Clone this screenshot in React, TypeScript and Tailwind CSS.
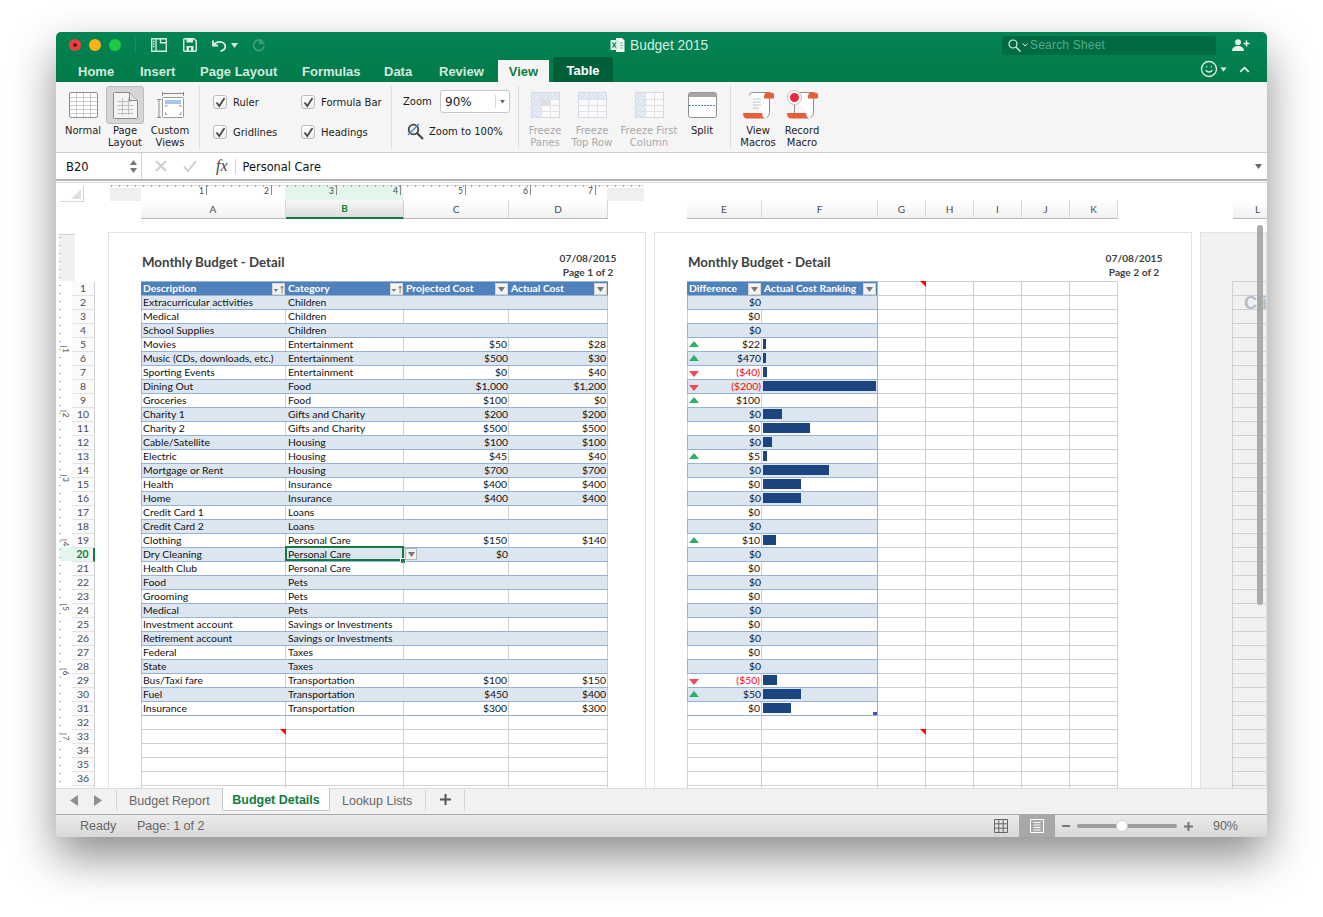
import { ChevronUp, Smile } from 'lucide-react'
import type { ReactNode } from 'react'

type Row = { a: string; b: string; c?: string; d?: string; e?: string; dir?: 'up' | 'down'; bar?: number }

const rows: Row[] = [
  { a: 'Extracurricular activities', b: 'Children', e: '$0' },
  { a: 'Medical', b: 'Children', e: '$0' },
  { a: 'School Supplies', b: 'Children', e: '$0' },
  { a: 'Movies', b: 'Entertainment', c: '$50', d: '$28', e: '$22', dir: 'up', bar: 3 },
  { a: 'Music (CDs, downloads, etc.)', b: 'Entertainment', c: '$500', d: '$30', e: '$470', dir: 'up', bar: 3 },
  { a: 'Sporting Events', b: 'Entertainment', c: '$0', d: '$40', e: '($40)', dir: 'down', bar: 4 },
  { a: 'Dining Out', b: 'Food', c: '$1,000', d: '$1,200', e: '($200)', dir: 'down', bar: 113 },
  { a: 'Groceries', b: 'Food', c: '$100', d: '$0', e: '$100', dir: 'up' },
  { a: 'Charity 1', b: 'Gifts and Charity', c: '$200', d: '$200', e: '$0', bar: 19 },
  { a: 'Charity 2', b: 'Gifts and Charity', c: '$500', d: '$500', e: '$0', bar: 47 },
  { a: 'Cable/Satellite', b: 'Housing', c: '$100', d: '$100', e: '$0', bar: 9 },
  { a: 'Electric', b: 'Housing', c: '$45', d: '$40', e: '$5', dir: 'up', bar: 4 },
  { a: 'Mortgage or Rent', b: 'Housing', c: '$700', d: '$700', e: '$0', bar: 66 },
  { a: 'Health', b: 'Insurance', c: '$400', d: '$400', e: '$0', bar: 38 },
  { a: 'Home', b: 'Insurance', c: '$400', d: '$400', e: '$0', bar: 38 },
  { a: 'Credit Card 1', b: 'Loans', e: '$0' },
  { a: 'Credit Card 2', b: 'Loans', e: '$0' },
  { a: 'Clothing', b: 'Personal Care', c: '$150', d: '$140', e: '$10', dir: 'up', bar: 13 },
  { a: 'Dry Cleaning', b: 'Personal Care', c: '$0', e: '$0' },
  { a: 'Health Club', b: 'Personal Care', e: '$0' },
  { a: 'Food', b: 'Pets', e: '$0' },
  { a: 'Grooming', b: 'Pets', e: '$0' },
  { a: 'Medical', b: 'Pets', e: '$0' },
  { a: 'Investment account', b: 'Savings or Investments', e: '$0' },
  { a: 'Retirement account', b: 'Savings or Investments', e: '$0' },
  { a: 'Federal', b: 'Taxes', e: '$0' },
  { a: 'State', b: 'Taxes', e: '$0' },
  { a: 'Bus/Taxi fare', b: 'Transportation', c: '$100', d: '$150', e: '($50)', dir: 'down', bar: 14 },
  { a: 'Fuel', b: 'Transportation', c: '$450', d: '$400', e: '$50', dir: 'up', bar: 38 },
  { a: 'Insurance', b: 'Transportation', c: '$300', d: '$300', e: '$0', bar: 28 },
]

const emptyRows = [32, 33, 34, 35, 36, 37]
const allRowNumbers = Array.from({ length: 37 }, (_, i) => i + 1)

// ---- ribbon icons ----

function NormalIcon() {
  return (
    <svg width="29" height="26" viewBox="0 0 29 26">
      <rect x="0.5" y="0.5" width="28" height="25" rx="1.5" fill="#fff" stroke="#8f8f8f" />
      {[5, 9, 13, 17, 21].map((y) => (
        <line key={y} x1="1" x2="28" y1={y + 0.5} y2={y + 0.5} stroke="#c9c9c9" />
      ))}
      {[7, 14, 21].map((x) => (
        <line key={x} x1={x + 0.5} x2={x + 0.5} y1="1" y2="25" stroke="#c9c9c9" />
      ))}
    </svg>
  )
}

function PageLayoutIcon() {
  return (
    <svg width="25" height="27" viewBox="0 0 25 27">
      <path d="M.5 1.5a1 1 0 0 1 1-1h15l8 8v17a1 1 0 0 1-1 1h-22a1 1 0 0 1-1-1z" fill="#f4f4f4" stroke="#8a8a8a" />
      <path d="M16.5.5v8h8" fill="#e4e4e4" stroke="#8a8a8a" />
      <path d="M4.5 9.5h13M4.5 13.5h16M4.5 17.5h16M4.5 21.5h16M9.5 6v17M15.5 6v17" stroke="#bdbdbd" fill="none" />
    </svg>
  )
}

function CustomViewsIcon() {
  return (
    <svg width="29" height="28" viewBox="0 0 29 28">
      <path d="M6.5 1v4M27.5 1v4M6.5 2.5h21" stroke="#8a8a8a" fill="none" />
      <path d="M1 8.5h4M3 8.5v18M1 26.5h4" stroke="#8a8a8a" fill="none" />
      <rect x="6.5" y="6.5" width="21" height="20" rx="1" fill="#fff" stroke="#9a9a9a" />
      <rect x="9" y="9" width="16" height="4" fill="#a9c6ea" />
      <path d="M9.5 16v-1.5h2M23 14.5h2v1.5M9.5 21v2.500h2M23 23.500h2V21" stroke="#9a9a9a" fill="none" />
    </svg>
  )
}

function FreezeIcon({ variant }: { variant: 'panes' | 'row' | 'col' }) {
  const hid = `hatch-${variant}`
  return (
    <svg width="29" height="26" viewBox="0 0 29 26">
      <defs>
        <pattern id={hid} width="3" height="3" patternUnits="userSpaceOnUse" patternTransform="rotate(45)">
          <rect width="3" height="3" fill="#f0f4fa" />
          <rect width="1.400" height="3" fill="#cfdcee" />
        </pattern>
      </defs>
      <rect x="0.5" y="0.5" width="28" height="25" fill="#fbfbfb" stroke="#d4dbe4" />
      {variant !== 'col' && <rect x="1" y="1" width="27" height="6" fill={`url(#${hid})`} />}
      {variant !== 'row' && <rect x="1" y="1" width="9" height="24" fill={`url(#${hid})`} />}
      {variant === 'panes' && <rect x="10" y="7" width="9" height="6" fill="#dedede" />}
      <path d="M1 7.500h27M1 13.500h27M1 19.500h27M10.500 1v24M19.500 1v24" stroke="#dde1e6" fill="none" />
    </svg>
  )
}

function SplitIcon() {
  return (
    <svg width="29" height="26" viewBox="0 0 29 26">
      <rect x="0.5" y="0.5" width="28" height="25" rx="2" fill="#fff" stroke="#8f8f8f" />
      <path d="M1 2.500a2 2 0 0 1 2-2h23a2 2 0 0 1 2 2V5H1z" fill="#a5a5a5" />
      <path d="M1 13.500h27" stroke="#3f83d8" strokeDasharray="2 1" />
    </svg>
  )
}

function ScrollIcon({ record }: { record?: boolean }) {
  return (
    <svg width="33" height="30" viewBox="0 0 33 30">
      <path d="M7.500 5.500q0-3 3-3h17v20q0 4-3 5" fill="#fff" stroke="#8c8c8c" />
      <path d="M25 2.500q-3 0-3 5v1h9q1 0 1-1V5q0-2.500-3-2.500z" fill="#e2603a" />
      <path d="M1 23h19q0 4 3 5.500H4q-3-1-3-5.500z" fill="#e2603a" />
      {!record && <path d="M11 9h8M11 12h8M11 15h8M11 18h6" stroke="#b9bfc8" fill="none" />}
      {record && (
        <>
          <circle cx="8.500" cy="7.500" r="7" fill="#fff" stroke="#bdbdbd" />
          <circle cx="8.500" cy="7.500" r="4.500" fill="#ea2839" />
          <path d="M8.500 15v8" stroke="#8c8c8c" />
        </>
      )}
    </svg>
  )
}

function Caret({ className = '' }: { className?: string }) {
  return (
    <svg width="7" height="5" viewBox="0 0 7 5" className={className}>
      <path d="M0 0h7L3.500 5z" fill="currentColor" />
    </svg>
  )
}

function RibbonButton({ icon, lines, width, selected, off }: { icon: ReactNode; lines: string[]; width: string; selected?: boolean; off?: boolean }) {
  return (
    <div className={`flex flex-col items-center ${width}`}>
      <div className={`flex h-[38px] w-[38px] shrink-0 items-center justify-center rounded-[3px] ${selected ? 'border border-[#bcbcbc] bg-[#d6d6d6]' : ''}`}>
        {icon}
      </div>
      <div className={`mt-px shrink-0 text-center text-[10px] leading-[12px] whitespace-nowrap ${off ? 'text-[#a9a9a9]' : 'text-[#1c1c1c]'}`}>
        {lines.map((l) => (
          <div key={l}>{l}</div>
        ))}
      </div>
    </div>
  )
}

function Check({ label, width }: { label: string; width: string }) {
  return (
    <div className={`flex h-[14px] items-center ${width}`}>
      <span className="flex h-[14px] w-[14px] items-center justify-center rounded-[3px] border border-[#bdbdbd] bg-gradient-to-b from-white to-[#ebebeb]">
        <svg width="11" height="11" viewBox="0 0 11 11">
          <path d="M1.500 5.500 4.300 9 9.500 1" fill="none" stroke="#444" strokeWidth="1.700" />
        </svg>
      </span>
      <span className="ml-[6px] text-[10px] text-[#1c1c1c] whitespace-nowrap">{label}</span>
    </div>
  )
}

// ---- sheet parts ----

function FilterBtn({ sorted }: { sorted?: boolean }) {
  return (
    <span className="absolute top-px right-px flex h-[12px] w-[13px] items-center justify-center border border-[#d4d4d4] bg-[#f3f3f3] text-[#777]">
      <Caret className={sorted ? 'mr-[1px] mt-[3px] scale-75' : ''} />
      {sorted && (
        <svg width="5" height="9" viewBox="0 0 5 9">
          <path d="M2.500 9V1M.5 3l2-2.500L4.500 3" stroke="#666" fill="none" />
        </svg>
      )}
    </span>
  )
}

function HeaderCell({ label, width, sorted, last }: { label: string; width: string; sorted?: boolean; last?: boolean }) {
  return (
    <div className={`relative h-full shrink-0 bg-[#4f81bd] pl-[2px] text-[10.3px] leading-[13px] font-bold text-white ${width} ${last ? 'border-r border-[#95b3d7]' : ''}`}>
      {label}
      <FilterBtn sorted={sorted} />
    </div>
  )
}

function Cell({ width, band, right, first, last, children }: { width: string; band?: boolean; right?: boolean; first?: boolean; last?: boolean; children?: ReactNode }) {
  return (
    <div
      className={`relative h-full shrink-0 whitespace-nowrap ${width} ${right ? 'pr-px text-right' : first ? 'pl-px' : 'pl-[2px]'} ${first ? 'border-l border-[#95b3d7]' : ''} ${
        last ? 'border-r border-[#c9c9c9]' : band ? '' : 'border-r border-[#cfcfcf]'
      }`}
    >
      {children}
    </div>
  )
}

function GridCell({ width, children }: { width: string; children?: ReactNode }) {
  return <div className={`relative h-full shrink-0 border-r border-[#d0d0d0] ${width}`}>{children}</div>
}

function RedMark() {
  return <span className="absolute -top-px -right-px h-0 w-0 border-t-[6px] border-l-[6px] border-t-[#ff0000] border-l-transparent" />
}

function PageHead({ page }: { page: number }) {
  return (
    <div className="flex h-[48px] items-start">
      <div className="mt-[21px] ml-[33px] text-[13.3px] leading-[16px] font-bold text-[#404040]">Monthly Budget - Detail</div>
      <div className="mt-[18px] mr-[27px] ml-auto w-[60px] text-center text-[10.2px] leading-[14px] font-bold whitespace-nowrap text-[#404040]">
        <div>07/08/2015</div>
        <div>Page {page} of 2</div>
      </div>
    </div>
  )
}

function PageOne() {
  return (
    <div className="ml-[13px] h-[600px] w-[538px] shrink-0 border border-[#e2e2e2] bg-white">
      <PageHead page={1} />
      <div className="ml-[32px] text-[10.4px] leading-[13px] text-[#111]">
        <div className="h-px w-[467px] bg-[#95b3d7]" />
        <div className="flex h-[14px] w-[467px] border-b border-[#95b3d7]">
          <HeaderCell label="Description" width="w-[145px]" sorted />
          <HeaderCell label="Category" width="w-[118px]" sorted />
          <HeaderCell label="Projected Cost" width="w-[105px]" />
          <HeaderCell label="Actual Cost" width="w-[99px]" />
        </div>
        {rows.map((r, i) => {
          const n = i + 2
          const band = n % 2 === 0
          return (
            <div key={n} className={`flex h-[14px] w-[467px] border-b border-[#95b3d7] ${band ? 'bg-[#dce6f1]' : ''}`}>
              <Cell width="w-[145px]" band={band} first>
                {r.a}
              </Cell>
              <Cell width="w-[118px]" band={band}>
                {r.b}
                {n === 20 && (
                  <>
                    <span className="absolute -top-[2px] -left-px h-[15px] w-[119px] border-2 border-[#107c41]" />
                    <span className="absolute -right-[2px] -bottom-[3px] h-[6px] w-[6px] border border-white bg-[#107c41]" />
                    <span className="absolute top-0 -right-[13px] z-10 flex h-[12px] w-[12px] items-center justify-center border border-[#b5b5b5] bg-[#f0f0f0] text-[#777]">
                      <Caret />
                    </span>
                  </>
                )}
              </Cell>
              <Cell width="w-[105px]" band={band} right>
                {r.c}
              </Cell>
              <Cell width="w-[99px]" band={band} right last>
                {r.d}
              </Cell>
            </div>
          )
        })}
        {emptyRows.map((n) => (
          <div key={n} className="flex h-[14px] w-[467px] border-b border-[#d0d0d0]">
            <GridCell width="w-[145px] border-l">{n === 33 && <RedMark />}</GridCell>
            <GridCell width="w-[118px]" />
            <GridCell width="w-[105px]" />
            <GridCell width="w-[99px]" />
          </div>
        ))}
      </div>
    </div>
  )
}

function PageTwo() {
  const tail = ['g', 'h', 'i', 'j', 'k']
  return (
    <div className="ml-[8px] h-[600px] w-[538px] shrink-0 border border-[#e2e2e2] bg-white">
      <PageHead page={2} />
      <div className="ml-[32px] text-[10.4px] leading-[13px] text-[#111]">
        <div className="flex h-px">
          <div className="w-[191px] bg-[#95b3d7]" />
          <div className="w-[240px] bg-[#d0d0d0]" />
        </div>
        <div className="flex h-[14px] w-[431px]">
          <div className="flex border-b border-[#95b3d7]">
            <HeaderCell label="Difference" width="w-[75px]" />
            <HeaderCell label="Actual Cost Ranking" width="w-[116px]" last />
          </div>
          <div className="flex border-b border-[#d0d0d0]">
            {tail.map((k) => (
              <GridCell key={k} width="w-[48px]">
                {k === 'g' && <RedMark />}
              </GridCell>
            ))}
          </div>
        </div>
        {rows.map((r, i) => {
          const n = i + 2
          const band = n % 2 === 0
          return (
            <div key={n} className="flex h-[14px] w-[431px]">
              <div className={`flex border-b border-[#95b3d7] ${band ? 'bg-[#dce6f1]' : ''}`}>
                <Cell width="w-[75px]" band={band} right first>
                  {r.dir === 'up' && (
                    <svg width="10" height="6" viewBox="0 0 10 6" className="absolute top-[3px] left-[1px]">
                      <path d="M5 0l5 6H0z" fill="#2fae6b" />
                    </svg>
                  )}
                  {r.dir === 'down' && (
                    <svg width="10" height="6" viewBox="0 0 10 6" className="absolute top-[5px] left-[1px]">
                      <path d="M0 0h10L5 6z" fill="#f0495a" />
                    </svg>
                  )}
                  <span className={r.dir === 'down' ? 'text-[#ff0000]' : ''}>{r.e}</span>
                </Cell>
                <div className="relative h-full w-[116px] shrink-0 border-r border-[#95b3d7] pt-[1px] pl-px">
                  {r.bar && <div className="h-[10px] bg-[#1b4481]" style={{ width: r.bar }} />}
                  {n === 31 && <span className="absolute right-0 bottom-0 h-[3px] w-[4px] bg-[#4a50b5]" />}
                </div>
              </div>
              <div className="flex border-b border-[#d0d0d0]">
                {tail.map((k) => (
                  <GridCell key={k} width="w-[48px]" />
                ))}
              </div>
            </div>
          )
        })}
        {emptyRows.map((n) => (
          <div key={n} className="flex h-[14px] w-[431px] border-b border-[#d0d0d0]">
            <GridCell width="w-[75px] border-l" />
            <GridCell width="w-[116px]" />
            {tail.map((k) => (
              <GridCell key={k} width="w-[48px]">
                {n === 33 && k === 'g' && <RedMark />}
              </GridCell>
            ))}
          </div>
        ))}
      </div>
    </div>
  )
}

function PageThree() {
  return (
    <div className="ml-[8px] h-[600px] flex-1 border border-[#e2e2e2] bg-[#f1f1f1]">
      <div className="h-[48px]" />
      <div className="relative ml-[31px] border-t border-l border-[#d0d0d0]">
        {allRowNumbers.map((n) => (
          <div key={n} className="h-[14px] border-b border-[#d0d0d0]" />
        ))}
        <span className="absolute top-[11px] left-[11px] font-['Liberation_Sans',sans-serif] text-[18px] leading-[20px] font-bold whitespace-nowrap text-[#b4bcc8]">
          Cli
        </span>
      </div>
    </div>
  )
}

function VerticalRuler() {
  const marks = [131.5, 196, 260.5, 325, 389.5, 454, 519]
  const small = Array.from({ length: 70 }, (_, i) => 18 + i * 8)
  return (
    <svg width="12" height="569" viewBox="0 0 12 569" className="shrink-0 overflow-visible">
      <rect x="-1" y="15" width="16" height="47" fill="#f0f0f0" />
      <rect x="-1" y="15" width="16" height="1" fill="#cfcfcf" />
      <rect x="0" y="328" width="13" height="14" fill="#e2f6ec" />
      {small.map((y) => (
        <line key={y} x1="-1" x2="1" y1={y + 0.5} y2={y + 0.5} stroke="#b4b4b4" />
      ))}
      {marks.map((y, i) => (
        <g key={y}>
          <line x1="0" x2="7" y1={y - 4} y2={y - 4} stroke="#8a8a8a" />
          <text x="0" y="0" fontSize="8" fill="#444" fontFamily="Lato, sans-serif" textAnchor="middle" transform={`translate(3 ${y}) rotate(90)`}>
            {i + 1}
          </text>
        </g>
      ))}
    </svg>
  )
}

function HorizontalRuler() {
  const marks = [96, 161, 226, 290, 355, 420, 485]
  const small = Array.from({ length: 67 }, (_, i) => i * 8 + 1)
  return (
    <svg width="535" height="16" viewBox="0 0 535 16" className="mt-[2px] shrink-0">
      <rect x="0" y="3" width="31" height="13" fill="#efefef" />
      <rect x="497" y="3" width="37" height="13" fill="#efefef" />
      <rect x="175" y="1" width="118" height="15" fill="#e2f6ec" />
      <line x1="0" x2="534" y1="0.500" y2="0.500" stroke="#dedede" />
      {small.map((x) => (
        <line key={x} x1={x + 0.5} x2={x + 0.5} y1="0" y2="2" stroke="#a8a8a8" />
      ))}
      {marks.map((x, i) => (
        <g key={x}>
          <line x1={x + 0.5} x2={x + 0.5} y1="0" y2="10" stroke="#8a8a8a" />
          <text x={x - 2} y="9" fontSize="8.500" textAnchor="end" fill="#444" fontFamily="Lato, sans-serif">
            {i + 1}
          </text>
        </g>
      ))}
    </svg>
  )
}

function ColHead({ label, width, active }: { label: string; width: string; active?: boolean }) {
  return (
    <div
      className={`flex h-full shrink-0 items-center justify-center border-r text-[10px] ${width} ${
        active
          ? 'border-b-2 border-r-[#cfcfcf] border-b-[#107c41] bg-gradient-to-b from-[#f8f8f8] to-[#dcdcdc] font-bold text-[#107c41]'
          : 'border-b border-r-[#d8d8d8] border-b-[#b8b8b8] bg-gradient-to-b from-white to-[#f1f1f1] text-[#4a4a55]'
      }`}
    >
      {label}
    </div>
  )
}

export default function App() {
  return (
    <div className="h-[917px] w-[1323px] overflow-hidden bg-white pt-[32px] pl-[56px]">
      <div className="flex h-[805px] w-[1211px] flex-col overflow-hidden rounded-[5px] bg-white font-['Liberation_Sans',sans-serif] shadow-[0_20px_45px_rgba(0,0,0,0.45)]">
        {/* green title bar */}
        <div className="h-[50px] shrink-0 bg-gradient-to-b from-[#038453] to-[#027a4a]">
          <div className="flex h-[26px] items-center">
            <div className="flex w-[554px] items-center">
              <span className="ml-[13px] flex h-[12px] w-[12px] items-center justify-center rounded-full bg-[#f1403f]">
                <span className="h-[4px] w-[4px] rounded-full bg-[#6e0f10]" />
              </span>
              <span className="ml-[8px] h-[12px] w-[12px] rounded-full bg-[#fbb216]" />
              <span className="ml-[8px] h-[12px] w-[12px] rounded-full bg-[#1fc94b]" />
              <span className="ml-[14px] h-[16px] w-px bg-[#0f9463]" />
              <svg width="16" height="14" viewBox="0 0 16 14" className="ml-[15px] text-[#dcefe6]">
                <path d="M.75.75h14.500v12.500H.75zM5 .75v12.500M2 3.500h1.500M2 6h1.500M2 8.500h1.500" fill="none" stroke="currentColor" strokeWidth="1.300" />
                <path d="M9.500.75v4h5.500" fill="none" stroke="currentColor" strokeWidth="1.300" />
              </svg>
              <svg width="14" height="14" viewBox="0 0 14 14" className="ml-[16px] text-[#dcefe6]">
                <path d="M1.500.75h9.500L13.250 3v9.500a.75.75 0 0 1-.75.750h-11a.75.75 0 0 1-.75-.75v-11a.75.75 0 0 1 .75-.75z" fill="none" stroke="currentColor" strokeWidth="1.400" />
                <path d="M3.500 1h6.500v3.500H3.500zM3.500 8h7v5.500h-7z" fill="currentColor" />
                <rect x="6" y="9.500" width="2" height="3" fill="#027f4e" />
              </svg>
              <svg width="16" height="13" viewBox="0 0 16 13" className="ml-[15px] text-[#dcefe6]">
                <path d="M1 1.500v5h5M1.500 6.200C3 3.800 5 2.800 7.500 2.800c3.500 0 5.800 2.200 5.800 4.700S11 12 8.500 12" fill="none" stroke="currentColor" strokeWidth="1.800" />
              </svg>
              <Caret className="ml-[3px] text-[#cfe8dc]" />
              <svg width="13" height="14" viewBox="0 0 13 14" className="ml-[14px] text-[#3f9f79]">
                <path d="M8 1v4.500h4.500M11.500 5A5.200 5.200 0 1 0 12 8" fill="none" stroke="currentColor" strokeWidth="1.700" />
              </svg>
            </div>
            <div className="flex w-[392px] items-center">
              <svg width="15" height="16" viewBox="0 0 15 16">
                <path d="M6 1h6l2.500 2.500V15H6z" fill="#f2f8f5" />
                <rect x="0.500" y="3" width="8" height="10" fill="#d7eee2" />
                <path d="M2.500 5.500l3.500 5M6 5.500l-3.500 5" stroke="#027f4e" strokeWidth="1.200" />
                <path d="M10 6h3M10 8.500h3M10 11h3" stroke="#79b89b" />
              </svg>
              <span className="mt-[3px] ml-[5px] text-[13.8px] text-[#d6ece2]">Budget 2015</span>
            </div>
            <div className="flex h-[19px] w-[214px] items-center rounded-[3px] bg-[#006a43] pl-[6px]">
              <svg width="13" height="13" viewBox="0 0 13 13">
                <circle cx="5" cy="5" r="4" fill="none" stroke="#dcefe6" strokeWidth="1.200" />
                <path d="M8 8l4.500 4.500" stroke="#dcefe6" strokeWidth="1.300" />
              </svg>
              <svg width="6" height="4" viewBox="0 0 6 4" className="ml-px">
                <path d="M.5.5 3 3 5.500.5" fill="none" stroke="#dcefe6" />
              </svg>
              <span className="ml-[2px] text-[12px] tracking-[0.2px] text-[#58a98a]">Search Sheet</span>
            </div>
            <svg width="18" height="12" viewBox="0 0 18 12" className="ml-[16px]">
              <circle cx="6" cy="3.200" r="3" fill="#e2f1ea" />
              <path d="M0 12c0-3.500 2.500-5 6-5s6 1.500 6 5z" fill="#e2f1ea" />
              <path d="M14.500 1.500v6M11.500 4.500h6" stroke="#e2f1ea" strokeWidth="1.600" />
            </svg>
          </div>
          <div className="flex h-[24px] items-end text-[13px] font-bold text-[#d3eadf]">
            <span className="mb-[1px] ml-[22px] w-[62px]">Home</span>
            <span className="mb-[1px] w-[60px]">Insert</span>
            <span className="mb-[1px] w-[102px]">Page Layout</span>
            <span className="mb-[1px] w-[82px]">Formulas</span>
            <span className="mb-[1px] w-[55px]">Data</span>
            <span className="mb-[1px] w-[59px]">Review</span>
            <span className="flex h-[22px] w-[51px] items-center justify-center bg-[#f5f5f5] pt-[1px] text-[#107c41]">View</span>
            <span className="ml-[4px] -mt-px flex h-[25px] w-[60px] items-center justify-center rounded-t-[4px] bg-[#005f39] pt-[3px] text-white">Table</span>
            <div className="mb-[4px] ml-auto flex items-center text-[#dcefe6]">
              <Smile size={18} strokeWidth={1.800} />
              <Caret className="ml-[2px] scale-90" />
              <ChevronUp size={15} strokeWidth={3} className="mr-[15px] ml-[10px]" />
            </div>
          </div>
        </div>

        {/* ribbon */}
        <div className="flex h-[71px] shrink-0 border-b border-[#cfcfcf] bg-[#f5f5f5] pt-[4px] font-['DejaVu_Sans',sans-serif]">
          <div className="flex h-[62px] w-[144px] border-r border-[#dcdcdc] pl-[6px]">
            <RibbonButton icon={<NormalIcon />} lines={['Normal']} width="w-[42px]" />
            <RibbonButton icon={<PageLayoutIcon />} lines={['Page', 'Layout']} width="w-[42px]" selected />
            <RibbonButton icon={<CustomViewsIcon />} lines={['Custom', 'Views']} width="w-[46px] ml-[1px]" />
          </div>
          <div className="h-[62px] w-[192px] border-r border-[#dcdcdc] pt-[9px] pl-[13px]">
            <div className="flex">
              <Check label="Ruler" width="w-[88px]" />
              <Check label="Formula Bar" width="w-[88px]" />
            </div>
            <div className="mt-[16px] flex">
              <Check label="Gridlines" width="w-[88px]" />
              <Check label="Headings" width="w-[88px]" />
            </div>
          </div>
          <div className="h-[62px] w-[127px] border-r border-[#dcdcdc] pt-[4px] pl-[11px] text-[10px] text-[#1c1c1c]">
            <div className="flex items-center">
              <span className="w-[37px]">Zoom</span>
              <div className="flex h-[23px] w-[70px] items-center rounded-[3px] border border-[#c6c6c6] bg-white pl-[4px] text-[12px]">
                <span>90%</span>
                <span className="ml-auto flex h-[13px] w-[14px] items-center justify-center border-l border-[#d8d8d8] text-[#666]">
                  <Caret className="scale-75" />
                </span>
              </div>
            </div>
            <div className="mt-[10px] flex items-center">
              <svg width="17" height="17" viewBox="0 0 17 17" className="ml-[4px]">
                <circle cx="6.500" cy="6.500" r="4.800" fill="none" stroke="#444" strokeWidth="1.800" />
                <path d="M10 10l6 6" stroke="#444" strokeWidth="2.200" />
                <path d="M1 12 12 1" stroke="#3d86d9" strokeWidth="1.500" />
              </svg>
              <span className="ml-[5px] whitespace-nowrap">Zoom to 100%</span>
            </div>
          </div>
          <div className="flex h-[62px] w-[212px] border-r border-[#dcdcdc] pl-[3px]">
            <RibbonButton icon={<FreezeIcon variant="panes" />} lines={['Freeze', 'Panes']} width="w-[46px]" off />
            <RibbonButton icon={<FreezeIcon variant="row" />} lines={['Freeze', 'Top Row']} width="w-[48px]" off />
            <RibbonButton icon={<FreezeIcon variant="col" />} lines={['Freeze First', 'Column']} width="w-[66px]" off />
            <RibbonButton icon={<SplitIcon />} lines={['Split']} width="w-[40px]" />
          </div>
          <div className="flex h-[62px] pl-[5px]">
            <RibbonButton icon={<ScrollIcon />} lines={['View', 'Macros']} width="w-[44px]" />
            <RibbonButton icon={<ScrollIcon record />} lines={['Record', 'Macro']} width="w-[44px]" />
          </div>
        </div>

        {/* formula bar */}
        <div className="flex h-[28px] shrink-0 items-center border-b-2 border-[#b4b4b4] bg-white font-['DejaVu_Sans',sans-serif]">
          <div className="flex h-full w-[86px] items-center border-r border-[#d4d4d4] pl-[10px] text-[11.5px] text-[#111]">
            <span className="mt-[3px]">B20</span>
            <span className="mr-[4px] ml-auto flex flex-col gap-[3px] text-[#777]">
              <Caret className="rotate-180" />
              <Caret />
            </span>
          </div>
          <svg width="12" height="12" viewBox="0 0 12 12" className="ml-[13px]">
            <path d="M1 1l10 10M11 1 1 11" stroke="#cfcfcf" strokeWidth="2" />
          </svg>
          <svg width="14" height="12" viewBox="0 0 14 12" className="ml-[16px]">
            <path d="M1 6.500 5 11 13 1" fill="none" stroke="#cfcfcf" strokeWidth="2" />
          </svg>
          <span className="ml-[19px] font-['Liberation_Serif',serif] text-[16px] text-[#444] italic">fx</span>
          <span className="ml-[7px] h-[15px] w-px bg-[#d4d4d4]" />
          <span className="mt-[3px] ml-[7px] text-[11.4px] text-[#111]">Personal Care</span>
          <Caret className="mr-[5px] ml-auto text-[#666]" />
        </div>
        <div className="h-[2px] shrink-0 border-b border-[#d8d8d8] bg-white" />

        {/* rulers and column headings */}
        <div className="h-[36px] shrink-0 bg-white font-['Lato',sans-serif]">
          <div className="flex h-[17px]">
            <div className="relative mt-[2px] ml-[4px] h-[17px] w-[24px] shrink-0 border-r border-b border-[#d4d4d4]">
              <span className="absolute right-[2px] bottom-[2px] h-0 w-0 border-b-[10px] border-l-[10px] border-b-[#e0e0e0] border-l-transparent" />
            </div>
            <div className="ml-[26px]">
              <HorizontalRuler />
            </div>
          </div>
          <div className="flex h-[19px] pl-[85px]">
            <ColHead label="A" width="w-[145px]" />
            <ColHead label="B" width="w-[118px]" active />
            <ColHead label="C" width="w-[105px]" />
            <ColHead label="D" width="w-[99px]" />
            <div className="w-[79px] shrink-0" />
            <ColHead label="E" width="w-[75px]" />
            <ColHead label="F" width="w-[116px]" />
            <ColHead label="G" width="w-[48px]" />
            <ColHead label="H" width="w-[48px]" />
            <ColHead label="I" width="w-[48px]" />
            <ColHead label="J" width="w-[48px]" />
            <ColHead label="K" width="w-[48px]" />
            <div className="w-[115px] shrink-0" />
            <ColHead label="L" width="w-[50px]" />
          </div>
        </div>

        {/* sheet */}
        <div className="relative flex h-[569px] shrink-0 overflow-hidden bg-white pl-[4px] font-['Lato',sans-serif]">
          <VerticalRuler />
          <div className="w-[23px] shrink-0 pt-[63px]">
            {allRowNumbers.map((n) => (
              <div
                key={n}
                className={`flex h-[14px] items-center justify-center border-b border-[#e2e2e2] text-[10.4px] ${
                  n === 20
                    ? 'border-r-2 border-r-[#107c41] bg-gradient-to-r from-[#e2f6ec] to-[#f4f4f4] font-bold text-[#107c41]'
                    : 'border-r border-r-[#cfcfcf] bg-[#fafafa] text-[#4a4a55]'
                }`}
              >
                {n < 37 ? n : ''}
              </div>
            ))}
          </div>
          <div className="flex flex-1 pt-[13px]">
            <PageOne />
            <PageTwo />
            <PageThree />
          </div>
          <div className="absolute top-[6px] right-[4px] h-[380px] w-[6px] rounded-full bg-[#a3a3a3]/90" />
        </div>

        {/* sheet tabs */}
        <div className="flex h-[26px] shrink-0 items-start border-t border-[#dcdcdc] bg-[#f1f1f1] text-[12.5px] text-[#666]">
          <svg width="9" height="11" viewBox="0 0 9 11" className="mt-[6px] ml-[14px]">
            <path d="M8 0v11L0 5.500z" fill="#8f8f8f" />
          </svg>
          <svg width="9" height="11" viewBox="0 0 9 11" className="mt-[6px] ml-[14px]">
            <path d="M1 0v11l8-5.500z" fill="#8f8f8f" />
          </svg>
          <span className="mt-[1px] ml-[14px] h-[21px] w-px bg-[#d4d4d4]" />
          <span className="mt-[3px] ml-[12px] w-[93px]">Budget Report</span>
          <span className="-mt-px flex h-[23px] w-[108px] items-center justify-center rounded-b-[2px] border-x border-b border-[#c4c4c4] bg-white pt-[3px] font-bold text-[#107c41]">
            Budget Details
          </span>
          <span className="mt-[3px] ml-[12px] w-[83px]">Lookup Lists</span>
          <span className="mt-[1px] h-[21px] w-px bg-[#d4d4d4]" />
          <svg width="11" height="11" viewBox="0 0 11 11" className="mt-[5px] ml-[14px]">
            <path d="M5.500 0v11M0 5.500h11" stroke="#555" strokeWidth="2" />
          </svg>
          <span className="mt-[1px] ml-[13px] h-[21px] w-px bg-[#d4d4d4]" />
        </div>

        {/* status bar */}
        <div className="flex h-[23px] shrink-0 items-center border-t border-[#a9a9a9] bg-gradient-to-b from-[#ebebeb] to-[#d8d8d8] text-[12.5px] text-[#666]">
          <span className="ml-[24px] w-[57px]">Ready</span>
          <span>Page: 1 of 2</span>
          <svg width="14" height="14" viewBox="0 0 14 14" className="ml-auto">
            <path d="M.5.5h13v13H.5zM.5 4.800h13M.5 9.200h13M4.800.5v13M9.200.5v13" fill="none" stroke="#666" />
          </svg>
          <span className="ml-[11px] flex h-full w-[36px] items-center justify-center bg-[#a8a8a8]">
            <svg width="14" height="14" viewBox="0 0 14 14">
              <path d="M.5.5h13v13H.5z" fill="none" stroke="#fff" />
              <path d="M3.500 3.500h7M3.500 6h7M3.500 8.500h7M3.500 11h7" stroke="#fff" />
            </svg>
          </span>
          <span className="ml-[7px] h-[2px] w-[8px] bg-[#777]" />
          <div className="relative ml-[7px] h-[4px] w-[100px] rounded-full bg-[#9c9c9c]">
            <span className="absolute -top-[4px] left-[39px] h-[12px] w-[12px] rounded-full border border-[#cfcfcf] bg-white" />
          </div>
          <svg width="9" height="9" viewBox="0 0 9 9" className="ml-[7px]">
            <path d="M4.500 0v9M0 4.500h9" stroke="#777" strokeWidth="2" />
          </svg>
          <span className="mr-[29px] ml-[20px]">90%</span>
        </div>
      </div>
    </div>
  )
}
